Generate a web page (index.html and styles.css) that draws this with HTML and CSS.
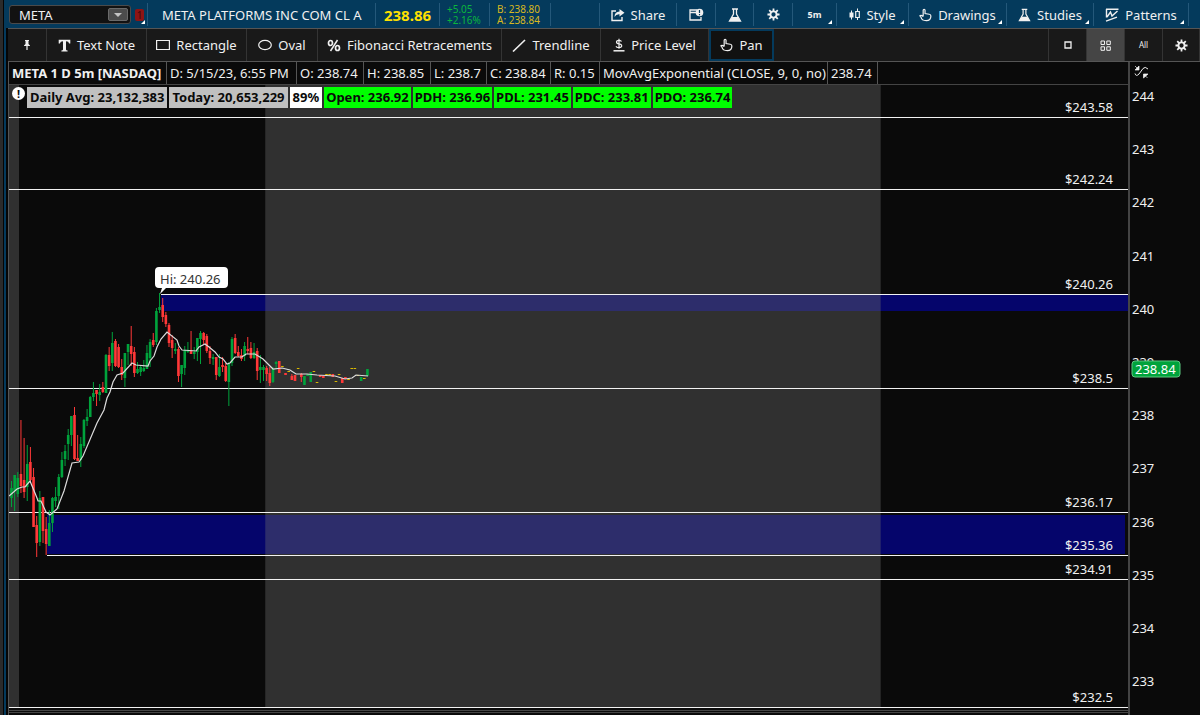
FILE: index.html
```html
<!DOCTYPE html>
<html lang="en">
<head>
  <meta charset="UTF-8" />
  <meta name="viewport" content="width=device-width, initial-scale=1.0" />
  <title>META 1 D 5m</title>
  <link rel="stylesheet" href="styles.css">
</head>
<body>

  <svg class="sprite" aria-hidden="true">
    <symbol id="i-flask" viewBox="0 0 14 14">
      <path d="M4 1h6M5.500 1v5L1.500 13h11L8.500 6V1" fill="none" stroke="currentColor" stroke-width="1.300" />
      <path d="M4 9h6l2.500 4h-11z" fill="currentColor" />
    </symbol>
    <symbol id="i-gear" viewBox="0 0 14 14">
      <path d="M7 .5v13M.5 7h13M2.400 2.400l9.200 9.200M11.600 2.400l-9.200 9.200" stroke="currentColor" stroke-width="1.900" />
      <circle cx="7" cy="7" r="3.300" fill="var(--bg)" stroke="currentColor" stroke-width="2" />
    </symbol>
    <symbol id="i-hand" viewBox="0 0 14 14">
      <path d="M4.500 8.500V2a1 1 0 0 1 2 0v3.500l4.500.7q1.800.3 1.800 1.800 0 5-5 5T2.300 9.700L1 7.900q1.200-1 3.500.6" fill="none" stroke="currentColor" stroke-width="1.300" />
    </symbol>
  </svg>

  <div class="window">
    <header class="topbar">
      <div class="cell symbol-cell">
        <div class="symbol-box">
          <input type="text" value="META" aria-label="Symbol">
          <button class="drop" aria-label="Symbol list"></button>
        </div>
        <button class="link-badge corner" aria-label="Link group 1">1</button>
      </div>
      <div class="cell company">META PLATFORMS INC COM CL A</div>
      <div class="cell last">238.86</div>
      <div class="cell stack up"><span>+5.05</span><span>+2.16%</span></div>
      <div class="cell stack quote"><span>B: 238.80</span><span>A: 238.84</span></div>
      <div class="cell"></div>
      <button class="cell">
        <svg width="14" height="14" viewBox="0 0 14 14"><path d="M5 3H1v9.500h10V9" fill="none" stroke="currentColor" stroke-width="1.400" /><path d="M8.500 1l5 3.800-5 3.700V6.300Q5 6 3.500 9 3.500 3.800 8.500 3.500z" fill="currentColor" /></svg>
        Share
      </button>
      <button class="cell" aria-label="Alerts">
        <svg width="15" height="14" viewBox="0 0 15 14"><path d="M8 2H1v10h11V9M1 4.500h6" fill="none" stroke="currentColor" stroke-width="1.300" /><circle cx="10.500" cy="4.500" r="3.800" fill="currentColor" /><path d="M10.500 2v3M10.500 6v1.200" stroke="#043a5c" stroke-width="1.200" /></svg>
      </button>
      <button class="cell" aria-label="Edit studies"><svg width="14" height="14"><use href="#i-flask" /></svg></button>
      <button class="cell" aria-label="Settings"><svg width="13" height="13"><use href="#i-gear" /></svg></button>
      <button class="cell small corner">5m</button>
      <button class="cell corner">
        <svg width="11" height="14" viewBox="0 0 11 14"><path d="M2.500 2.500v9M8.500 0.500v3M8.500 9v3" stroke="currentColor" /><path d="M0.500 4.500h4v5h-4z" fill="currentColor" /><path d="M6.700 3.500h3.600v6H6.700z" fill="none" stroke="currentColor" stroke-width="1.200" /></svg>
        Style
      </button>
      <button class="cell corner"><svg width="13" height="14"><use href="#i-hand" /></svg>Drawings</button>
      <button class="cell corner"><svg width="13" height="14"><use href="#i-flask" /></svg>Studies</button>
      <button class="cell corner">
        <svg width="14" height="14" viewBox="0 0 14 14"><path d="M1 1.200h12.500M1.500 1v8.500M2 9l3.500-5 1.500 4 5.500-5M1 13.200l11-4" fill="none" stroke="currentColor" stroke-width="1.400" /></svg>
        Patterns
      </button>
      <div></div>
    </header>

    <nav class="toolbar">
      <button class="cell" aria-label="Pin"><svg width="10" height="12" viewBox="0 0 10 12"><path d="M3 1h4v1H6.500v3L8 6.500V7H2v-.5L3.500 5V2H3z" fill="currentColor" /><path d="M5 7v4" stroke="currentColor" stroke-width="1.200" /></svg></button>
      <button class="cell"><svg width="13" height="13" viewBox="0 0 13 13"><path d="M.7 4.500V.7h11.600v3.800h-1.200Q10.800 2.200 8 2.200v8.300q0 1 1.600 1.100v1H3.400v-1Q5 11.500 5 10.500V2.200q-2.800 0-3.100 2.300z" fill="currentColor" /></svg>Text Note</button>
      <button class="cell"><svg width="14" height="12" viewBox="0 0 14 12"><path d="M.6 1.500h12.800v9H.6z" fill="none" stroke="currentColor" stroke-width="1.200" /></svg>Rectangle</button>
      <button class="cell"><svg width="14" height="12" viewBox="0 0 14 12"><ellipse cx="7" cy="6" rx="6.300" ry="4.700" fill="none" stroke="currentColor" stroke-width="1.200" /></svg>Oval</button>
      <button class="cell"><svg width="14" height="13" viewBox="0 0 14 13"><path d="M10.500 1l-7 11" stroke="currentColor" stroke-width="1.500" /><ellipse cx="3.500" cy="4" rx="2" ry="2.500" fill="none" stroke="currentColor" stroke-width="1.700" /><ellipse cx="10.500" cy="9" rx="2" ry="2.500" fill="none" stroke="currentColor" stroke-width="1.700" /></svg>Fibonacci Retracements</button>
      <button class="cell"><svg width="14" height="13" viewBox="0 0 14 13"><path d="M1 12.500L13 1" stroke="currentColor" stroke-width="1.600" /></svg>Trendline</button>
      <button class="cell"><svg width="12" height="14" viewBox="0 0 12 14"><path d="M8.500 3.500Q8 2.300 6 2.300 3.500 2.300 3.500 4T6 5.800 8.700 7.700 6 9.500 3.300 8.200M6 .8v10" fill="none" stroke="currentColor" stroke-width="1.200" /><path d="M.5 12.800h11" stroke="currentColor" stroke-width="1.500" /></svg>Price Level</button>
      <button class="cell active"><svg width="13" height="14"><use href="#i-hand" /></svg>Pan</button>
      <div class="cell"></div>
      <button class="cell" aria-label="Single chart"><svg width="8" height="8"><path d="M1 1h6v6H1z" fill="none" stroke="currentColor" stroke-width="1.300" /></svg></button>
      <button class="cell selected" aria-label="Chart grid"><svg width="11" height="11" viewBox="0 0 11 11"><path d="M1 1h3.500v3.500H1zM6.800 1h3.500v3.500H6.800zM1 6.800h3.500v3.500H1zM6.800 6.800h3.500v3.500H6.800z" fill="none" stroke="currentColor" /></svg></button>
      <button class="cell tiny">All</button>
      <button class="cell" aria-label="Chart settings"><svg width="13" height="13"><use href="#i-gear" /></svg></button>
    </nav>

    <main class="content">
      <section class="pane">
        <div class="info">
          <strong>META 1 D 5m [NASDAQ]</strong>
          <span>D: 5/15/23, 6:55 PM</span>
          <span>O: 238.74</span>
          <span>H: 238.85</span>
          <span>L: 238.7</span>
          <span>C: 238.84</span>
          <span>R: 0.15</span>
          <span>MovAvgExponential (CLOSE, 9, 0, no)</span>
          <span>238.74</span>
          <span></span>
        </div>
        <div class="chart">
          <svg id="plot" role="img" aria-label="META price chart"></svg>
          <div class="tags">
            <span class="alert">!</span>
            <span class="tag">Daily Avg: 23,132,383</span>
            <span class="tag">Today: 20,653,229</span>
            <span class="tag white">89%</span>
            <span class="tag green">Open: 236.92</span>
            <span class="tag green">PDH: 236.96</span>
            <span class="tag green">PDL: 231.45</span>
            <span class="tag green">PDC: 233.81</span>
            <span class="tag green">PDO: 236.74</span>
          </div>
        </div>
        <div class="pane-end"></div>
      </section>
      <aside class="axis">
        <button class="fit" aria-label="Fit scale"><svg width="15" height="14" viewBox="0 0 15 14"><path d="M1 8.500q1 3.500 4 .5l4-5.500q2-2.500 5 .5" fill="none" stroke="currentColor" /><path d="M1 1l3.500 3.500M5 1v4H1zM13.500 13L10 9.500M9.500 13V9H14z" fill="currentColor" stroke="currentColor" stroke-width=".7" /></svg></button>
        <svg id="scale" role="img" aria-label="Price scale"></svg>
      </aside>
    </main>
  </div>

  <script src="chart.js"></script>
</body>
</html>
```

FILE: styles.css
```css
* {
  box-sizing: border-box;
}

body {
  margin: 0;
  background: #2b2b2b;
  color: #f0f0f0;
  font: 13px/20px "Noto Sans", "Open Sans", sans-serif;
  overflow: hidden;
}

button,
input {
  font: inherit;
  color: inherit;
  background: none;
  border: 0;
  border-radius: 0;
  padding: 0;
}

svg {
  display: block;
  flex: none;
}

.sprite {
  position: absolute;
  width: 0;
  height: 0;
}

.window {
  margin-left: 3px;
  min-height: 100vh;
  display: flex;
  flex-direction: column;
  background: linear-gradient(90deg, #050505 1px, #043a5c 1px, #043a5c 3px, #050505 3px, #050505 5px, #0a0a0a 5px);
}

/* top bar */

.topbar {
  --bg: #043a5c;
  display: grid;
  grid-template-columns: 140px 228px 64px 50px 61px 1fr 77px 39px 38px 39px 44px 72px 98px 87px 95px 11px;
  height: 28px;
  margin-left: 1px;
  padding: 3px 0 2px 4px;
  background: #043a5c;
}

.cell {
  position: relative;
  display: flex;
  align-items: center;
  justify-content: center;
  gap: 6px;
  white-space: nowrap;
}

.topbar .cell {
  border-right: 1px solid #24587a;
}

.topbar .symbol-cell {
  justify-content: flex-start;
  gap: 4px;
  padding-left: 1px;
}

.symbol-box {
  display: flex;
  align-items: center;
  width: 122px;
  height: 19px;
  background: #121212;
  border: 1px solid #4a4a4a;
  border-radius: 3px;
}

.symbol-box input {
  flex: 1;
  min-width: 0;
  padding-left: 9px;
}

.drop {
  display: flex;
  align-items: center;
  justify-content: center;
  width: 20px;
  height: 13px;
  margin-right: 2px;
  background: #4c4c4c;
  border: 1px solid #6a6a6a;
  border-radius: 2px;
}

.drop::before {
  content: "";
  border: 4px solid transparent;
  border-top-color: #c4c4c4;
  border-bottom: 0;
}

.link-badge {
  width: 9px;
  height: 12px;
  background: #8e1414;
  border-radius: 2px;
  color: #3c0808;
  font-size: 10px;
  line-height: 12px;
}

.company {
  justify-content: flex-start;
  padding-left: 14px;
}

.last {
  color: #ffe000;
  font-size: 15px;
  font-weight: bold;
}

.stack {
  flex-direction: column;
  align-items: flex-start;
  gap: 0;
  padding-left: 7px;
  font-size: 10px;
  line-height: 11px;
}

.up {
  color: #0bb53c;
}

.quote {
  color: #d8b820;
}

.small {
  font-size: 9px;
  font-weight: bold;
}

.corner::after {
  content: "";
  position: absolute;
  right: 4px;
  bottom: 2px;
  border: 2px solid #fff;
  border-top-color: transparent;
  border-left-color: transparent;
}

.link-badge.corner {
  position: relative;
}

.link-badge.corner::after {
  right: -1px;
  bottom: -3px;
}

/* drawing tools */

.toolbar {
  --bg: #191919;
  display: grid;
  grid-template-columns: 39px 100px 100px 71px 184px 99px 108px 65px 1fr 38px 38px 38px 37px;
  height: 34px;
  margin-left: 5px;
  background: #191919;
  border-top: 1px solid #555;
  border-bottom: 1px solid #555;
}

.toolbar .cell {
  border-right: 1px solid #343434;
}

.toolbar .active {
  border: 2px solid #043a5c;
  background: #111;
}

.toolbar .selected {
  background: #454545;
}

.tiny {
  font-size: 8px;
}

/* chart area */

.content {
  flex: 1;
  display: flex;
  margin-left: 5px;
}

.pane {
  flex: 1;
  min-width: 0;
  border-left: 1px solid #555;
  border-right: 2px solid #444;
}

.info {
  display: grid;
  grid-template-columns: 158px 130px 67px 67px 56px 64px 49px 228px 50px 1fr;
  height: 23px;
  border-bottom: 1px solid #444;
  line-height: 22px;
  white-space: nowrap;
}

.info > * {
  padding-left: 3px;
  border-right: 1px solid #555;
}

.info > :last-child {
  border-right: 0;
}

.chart {
  position: relative;
  height: 623px;
}

#plot {
  width: 100%;
  height: 623px;
}

#plot text,
#scale text {
  fill: #f0f0f0;
}

#plot .note {
  fill: #333;
}

#scale .current {
  fill: #fff;
}

.tags {
  position: absolute;
  top: 2px;
  left: 3px;
  display: flex;
  gap: 2px;
}

.tag {
  height: 21px;
  padding: 0 3px;
  background: #c0c0c0;
  color: #0a0a0a;
  font-weight: bold;
  white-space: nowrap;
}

.tag.white {
  background: #fff;
}

.tag.green {
  padding: 0 2px;
  background: #00ff00;
}

.alert {
  width: 13px;
  height: 13px;
  border-radius: 50%;
  background: #fff;
  color: #0a0a0a;
  font-size: 11px;
  font-weight: bold;
  line-height: 13px;
  text-align: center;
}

.pane-end {
  height: 3px;
  margin-top: 2px;
  border-top: 1px solid #444;
  border-bottom: 1px solid #444;
}

.axis {
  width: 70px;
}

.fit {
  display: block;
  height: 23px;
  padding: 0 0 4px 4px;
}

#scale {
  width: 100%;
  height: 629px;
}
```

FILE: chart.js
```js
const NS = 'http://www.w3.org/2000/svg';
const plot = document.getElementById('plot');
const scale = document.getElementById('scale');

const UNIT = 53.2;   // px per dollar
const STEP = 3.15;   // px per bar
const TOP = 85;      // bar data is measured from the top of the window

const priceY = p => 10 + (244 - p) * UNIT;

function add(parent, name, attrs, text) {
  const el = document.createElementNS(NS, name);
  for (const key in attrs) el.setAttribute(key, attrs[key]);
  if (text) el.textContent = text;
  parent.appendChild(el);
  return el;
}

// colour, high, body top, body bottom, low
const bars = [
  ['g',481,488,498,507], ['g',475,475,491,511], ['g',472,478,494,497], ['r',420,474,486,493],
  ['r',438,480,492,498], ['g',445,464,487,501], ['r',447,462,480,483], ['r',468,477,527,527],
  ['r',516,525,543,557], ['g',491,498,542,546], ['r',497,497,531,543], ['r',517,529,544,555],
  ['g',510,523,546,546], ['g',497,498,523,532], ['g',487,497,501,507], ['g',474,477,496,509],
  ['g',452,460,477,478], ['g',445,451,459,466], ['g',429,435,444,460], ['g',416,416,435,446],
  ['r',407,415,459,460], ['r',435,458,461,461], ['g',437,444,460,467], ['g',419,420,446,448],
  ['g',409,417,421,426], ['g',396,397,417,417], ['g',382,393,397,401], ['r',390,390,394,406],
  ['g',384,392,395,401], ['r',382,387,392,393], ['g',354,355,393,393], ['r',347,355,366,371],
  ['g',332,343,363,371], ['r',339,341,366,367], ['r',344,347,367,368], ['r',359,367,375,380],
  ['g',353,353,378,387], ['g',344,344,352,365], ['r',326,346,354,366], ['r',347,352,373,377],
  ['g',362,369,373,374], ['g',366,367,372,376], ['g',360,368,371,372], ['g',345,353,369,369],
  ['g',339,342,358,367], ['r',333,340,345,347], ['g',308,311,342,345], ['g',293,307,310,313],
  ['r',298,305,317,322], ['r',312,315,324,327], ['r',323,325,343,347], ['r',335,340,348,358],
  ['g',343,349,351,354], ['r',347,349,376,382], ['g',365,365,374,387], ['g',346,350,368,375],
  ['g',342,350,352,353], ['r',331,350,354,354], ['g',347,352,354,359], ['g',338,338,352,361],
  ['g',331,333,339,364], ['r',332,333,340,344], ['r',334,336,351,353], ['r',346,351,358,364],
  ['g',354,357,359,365], ['r',357,357,375,380], ['g',354,367,376,377], ['r',357,365,367,372],
  ['r',363,366,381,382], ['g',362,364,382,406], ['g',337,339,363,366], ['r',334,338,353,354],
  ['r',346,352,356,357], ['r',349,355,359,361], ['g',342,346,356,361], ['r',337,349,351,354],
  ['r',342,348,358,359], ['g',343,352,358,359], ['r',348,351,371,380], ['g',355,367,370,383],
  ['g',365,367,370,381], ['r',366,368,374,381], ['r',367,373,383,386], ['g',367,369,382,383],
  ['g',361,362,364,368], ['r',361,361,373,373], ['y',367], ['r',373,373,375,375],
  ['y',372], ['r',374,376,380,380], ['r',375,375,381,381], ['y',369],
  ['r',373,374,377,382], ['g',376,376,385,385], ['g',374,374,376,376], ['g',372,372,382,382],
  ['y',372], ['y',383], ['r',375,375,377,377], ['r',376,376,378,378],
  ['y',375], ['y',375], ['r',374,374,377,377], ['y',382],
  ['y',375], ['r',378,378,383,383], ['r',377,377,379,379], ['y',380],
  ['y',369], ['y',369], ['y',376], ['g',377,377,381,381],
  ['y',379], ['g',369,369,376,376]
];

const colours = { g: '#00a33c', r: '#ff3838', y: '#d8b800' };

const average = '9,496 17,489 22,487 25,487 30,481 37,498 38,501 41,501 46,512 50,515 57,509 64,491 72,463 79,462 ' +
  '83,456 97,423 104,410 107,398 110,392 113,382 117,375 123,373 132,363 136,365 148,366 150,361 154,356 157,347 ' +
  '161,339 167,332 177,340 179,346 182,350 196,351 199,347 205,344 209,347 215,352 219,357 223,359 227,364 230,363 ' +
  '235,357 242,357 246,354 255,354 263,359 270,366 273,369 282,368 290,370 296,374 307,374 317,375 335,376 345,379 ' +
  '352,378 356,375 368,376';

// supply and demand zones, the lower one stops short of the edge
add(plot, 'rect', { x: 152, y: 209, width: '100%', height: 17, fill: '#05056b' });
add(plot, 'rect', { x: 38, y: 430, width: '100%', height: 39, fill: '#05056b' });
add(plot, 'rect', { x: '100%', y: 430, width: 3, height: 39, fill: '#0a0a0a', transform: 'translate(-3 0)' });

// extended hours
add(plot, 'rect', { x: 0, y: 0, width: 10, height: '100%', fill: '#6b6b6b', 'fill-opacity': .39 });
add(plot, 'rect', { x: '22.9%', y: 0, width: '55%', height: '100%', fill: '#6b6b6b', 'fill-opacity': .39 });

// price levels
[[243.58, 0], [242.24, 0], [240.26, 152], [238.5, 0], [236.17, 0], [235.36, 38], [234.91, 0], [232.5, 0]].forEach(([price, from]) => {
  const y = Math.round(priceY(price)) + .5;
  add(plot, 'line', { x1: from, x2: '100%', y1: y, y2: y, stroke: '#f2f2f2' });
  add(plot, 'text', { x: '100%', y: y - 6, dx: -15, 'text-anchor': 'end' }, '$' + price);
});

// candles
const series = add(plot, 'g', { transform: `translate(0 ${-TOP})` });
bars.forEach(([kind, high, top, bottom, low], i) => {
  const x = 2.5 + i * STEP;
  const fill = colours[kind];
  if (kind === 'y') {
    add(series, 'rect', { x: x - 1.3, y: high - 1, width: 2.6, height: 1, fill });
    return;
  }
  add(series, 'rect', { x: x - .5, y: high, width: 1, height: low - high, fill });
  add(series, 'rect', { x: x - 1.3, y: top, width: 2.6, height: bottom - top, fill });
});
add(plot, 'polyline', { points: average, transform: `translate(-9 ${-TOP})`, fill: 'none', stroke: '#dcdcdc', 'stroke-width': 1.2 });

// day high bubble
add(plot, 'path', { d: 'M150 182h65q4 0 4 4v13q0 4-4 4h-58l-6 6 2-6h-3q-4 0-4-4v-13q0-4 4-4z', fill: '#fff' });
add(plot, 'text', { x: 151, y: 199, class: 'note' }, 'Hi: 240.26');

// price scale
for (let price = 244; price > 232; price--) {
  add(scale, 'text', { x: 2, y: priceY(price) + 6 }, String(price));
}
add(scale, 'rect', { x: 2, y: 276, width: 48, height: 16, rx: 3, fill: '#00a33c', stroke: '#5cc880' });
add(scale, 'text', { x: 5, y: 289, class: 'current' }, '238.84');
```
